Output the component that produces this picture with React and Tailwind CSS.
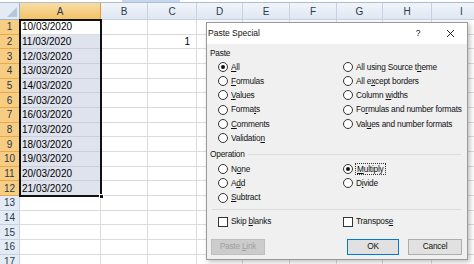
import React from "react";

const cols = [
  { name: "A", w: "w-[81px]" },
  { name: "B", w: "w-[47px]" },
  { name: "C", w: "w-[49px]" },
  { name: "D", w: "w-[46px]" },
  { name: "E", w: "w-[47px]" },
  { name: "F", w: "w-[47px]" },
  { name: "G", w: "w-[46px]" },
  { name: "H", w: "w-[49px]" },
  { name: "I", w: "w-[60px]" },
];

const dates = [
  "10/03/2020",
  "11/03/2020",
  "12/03/2020",
  "13/03/2020",
  "14/03/2020",
  "15/03/2020",
  "16/03/2020",
  "17/03/2020",
  "18/03/2020",
  "19/03/2020",
  "20/03/2020",
  "21/03/2020",
];

const rows = Array.from({ length: 17 }, (_, i) => i + 1);

const Radio = ({ checked, children, focus }) => (
  <div className="flex items-center h-[14.2px] whitespace-nowrap">
    <span className="w-[10px] h-[10px] rounded-full border border-[#333] bg-white flex items-center justify-center shrink-0">
      {checked && <span className="w-[4px] h-[4px] rounded-full bg-[#111]" />}
    </span>
    <span
      className={
        focus
          ? "ml-[2px] px-[1px] border border-dotted border-[#333] leading-[10px]"
          : "ml-[3px]"
      }
    >
      {children}
    </span>
  </div>
);

const Check = ({ children }) => (
  <div className="flex items-center h-[14px] whitespace-nowrap">
    <span className="w-[10px] h-[10px] border border-[#333] bg-white shrink-0" />
    <span className="ml-[3px]">{children}</span>
  </div>
);

const PasteSpecial = () => (
  <div
    className="absolute left-[206px] top-[22px] w-[262px] h-[238px] bg-[#f0f0f0] border border-[#9a9a9a] shadow-[2px_2px_5px_rgba(0,0,0,0.25)] flex flex-col text-[#111] text-[8.3px] tracking-[-0.2px]"
    style={{ fontFamily: '"Liberation Sans", Arial, sans-serif' }}
  >
    <div className="h-[21px] bg-white flex items-center pl-[1px] pr-[12px] text-[8.5px] tracking-normal shrink-0">
      <span>Paste Special</span>
      <span className="ml-auto w-[8px] text-center">?</span>
      <svg width="9" height="9" viewBox="0 0 9 9" className="ml-[24px]">
        <path d="M1 1L8 8M8 1L1 8" stroke="#222" strokeWidth="1" />
      </svg>
    </div>

    <div className="h-[10px] leading-[10px] mt-[4px] pl-[3px]">Paste</div>
    <div className="grid grid-cols-[125px_1fr] pl-[11px] mt-[2px]">
      <div className="flex flex-col">
        <Radio checked><u>A</u>ll</Radio>
        <Radio><u>F</u>ormulas</Radio>
        <Radio><u>V</u>alues</Radio>
        <Radio>Forma<u>t</u>s</Radio>
        <Radio><u>C</u>omments</Radio>
        <Radio>Validatio<u>n</u></Radio>
      </div>
      <div className="flex flex-col">
        <Radio>All using Source t<u>h</u>eme</Radio>
        <Radio>All e<u>x</u>cept borders</Radio>
        <Radio>Column <u>w</u>idths</Radio>
        <Radio>Fo<u>r</u>mulas and number formats</Radio>
        <Radio>Val<u>u</u>es and number formats</Radio>
      </div>
    </div>

    <div className="flex items-center h-[10px] mt-[4px] pl-[3px] pr-[6px]">
      <span className="leading-[10px]">Operation</span>
      <span className="flex-1 ml-[3px] border-t border-[#dcdcdc]" />
    </div>
    <div className="grid grid-cols-[125px_1fr] pl-[11px] mt-[3px]">
      <div className="flex flex-col">
        <Radio>N<u>o</u>ne</Radio>
        <Radio>A<u>d</u>d</Radio>
        <Radio><u>S</u>ubtract</Radio>
      </div>
      <div className="flex flex-col">
        <Radio checked focus><u>M</u>ultiply</Radio>
        <Radio>D<u>i</u>vide</Radio>
      </div>
    </div>

    <div className="mt-[4px] mx-[5px] border-t border-[#dcdcdc]" />
    <div className="grid grid-cols-[125px_1fr] pl-[11px] mt-[5px]">
      <Check>Skip <u>b</u>lanks</Check>
      <Check>Transpos<u>e</u></Check>
    </div>

    <div className="flex items-center mt-[10px] pl-[4px] pr-[5px] h-[16px]">
      <div className="w-[54px] h-[16px] bg-[#cccccc] border border-[#bfbfbf] flex items-center justify-center text-[#a0a0a0]">
        Paste <u className="ml-[2px]">L</u>ink
      </div>
      <div className="ml-auto w-[52px] h-[16px] bg-[#e1e1e1] border border-[#0078d7] flex items-center justify-center">
        OK
      </div>
      <div className="ml-[9px] w-[54px] h-[16px] bg-[#e1e1e1] border border-[#adadad] flex items-center justify-center">
        Cancel
      </div>
    </div>
  </div>
);

const App = () => {
  return (
    <div
      className="w-[474px] h-[264px] overflow-hidden relative bg-white"
      style={{ fontFamily: '"Liberation Sans", Arial, sans-serif' }}
    >
      <div className="h-[3px] flex bg-white border-b border-[#a9bfd6]">
        <div className="w-[122px]" />
        <div className="w-[58px] bg-[#c6d7ee]" />
      </div>

      <div className="flex h-[17px] text-[10px] text-[#2b3a4a]">
        <div className="w-[20px] shrink-0 bg-[#e4ebf5] border-r border-b border-[#9eb6ce] relative">
          <svg width="10" height="10" viewBox="0 0 10 10" className="absolute right-[2px] bottom-[2px]">
            <path d="M10 0L10 10L0 10Z" fill="#b7c6d8" />
          </svg>
        </div>
        {cols.map((c) => (
          <div
            key={c.name}
            className={`${c.w} shrink-0 flex items-center justify-center border-r border-b ${
              c.name === "A"
                ? "bg-gradient-to-b from-[#f9dca4] to-[#f2c266] border-[#e59a36]"
                : "bg-gradient-to-b from-[#f1f5fa] to-[#dfe7f2] border-[#c5d2e2]"
            }`}
          >
            {c.name}
          </div>
        ))}
      </div>

      <div className="relative">
        {rows.map((r) => {
          const sel = r <= 12;
          return (
            <div key={r} className="flex h-[14.67px] text-[10px]">
              <div
                className={`w-[20px] shrink-0 flex items-center justify-center border-b border-r ${
                  sel
                    ? "bg-[#f7cd84] border-[#e8a94c] text-[#2b3a4a]"
                    : "bg-[#e4ebf5] border-[#c5d2e2] text-[#2b3a4a]"
                }`}
              >
                {r}
              </div>
              {cols.map((c, ci) => (
                <div
                  key={c.name}
                  className={`${c.w} shrink-0 flex items-center border-r border-b ${
                    ci === 0 && sel && r > 1
                      ? "bg-[#dfe3ee] border-[#c9cfdc]"
                      : "bg-white border-[#dadcdd]"
                  } ${c.name === "C" ? "justify-end pr-[6px]" : "pl-[2px]"}`}
                >
                  {ci === 0 && sel ? dates[r - 1] : ""}
                  {c.name === "C" && r === 2 ? "1" : ""}
                </div>
              ))}
            </div>
          );
        })}
        <div className="absolute left-[19px] top-[-1px] w-[83px] h-[178px] border-2 border-[#111] pointer-events-none">
          <span className="absolute right-[-4px] bottom-[-4px] w-[5px] h-[5px] bg-[#111] border border-white" />
        </div>
      </div>

      <PasteSpecial />
    </div>
  );
};

export default App;
